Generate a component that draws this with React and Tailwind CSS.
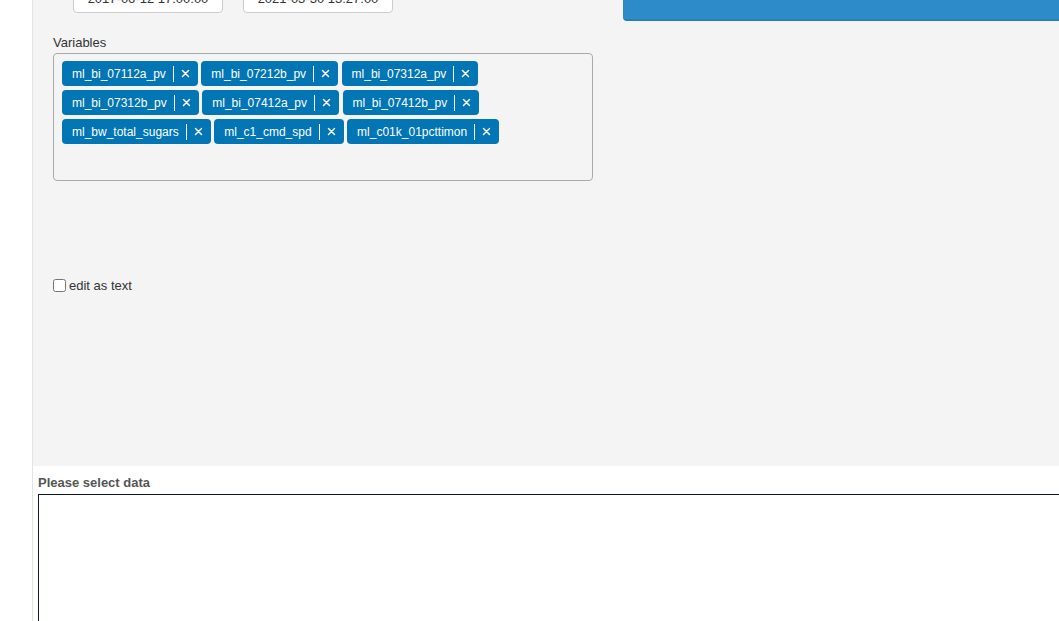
import React, { useState } from 'react';

const variables = [
    ['ml_bi_07112a_pv', 'ml_bi_07212b_pv', 'ml_bi_07312a_pv'],
    ['ml_bi_07312b_pv', 'ml_bi_07412a_pv', 'ml_bi_07412b_pv'],
    ['ml_bw_total_sugars', 'ml_c1_cmd_spd', 'ml_c01k_01pcttimon'],
];

function Tag({ name, onRemove }) {
    return (
        <div className="flex items-center h-[25px] rounded-[4px] bg-[#0275b5] text-white text-[12px] pl-[10px] pr-[8px]">
            <span>{name}</span>
            <span className="ml-[7px] h-[16px] border-l border-white"></span>
            <button className="ml-[7px] flex items-center" onClick={onRemove}>
                <svg width="9" height="9" viewBox="0 0 9 9">
                    <path d="M1.5 1.5 L7.5 7.5 M7.5 1.5 L1.5 7.5" stroke="white" strokeWidth="1.5" strokeLinecap="round" />
                </svg>
            </button>
        </div>
    );
}

export default function App() {
    const [selected, setSelected] = useState(variables);
    const [asText, setAsText] = useState(false);

    const removeTag = (name) => {
        setSelected(prev => prev.map(row => row.filter(v => v !== name)));
    };

    return (
        <div className="h-[621px] overflow-hidden flex bg-white text-[#333] font-['Liberation_Sans',Arial,sans-serif]">
            {/* left strip */}
            <div className="w-[32px] shrink-0 bg-white"></div>
            <div className="flex-1 min-w-0 border-l border-[#e3e3e3] flex flex-col">
                {/* filter panel */}
                <div className="h-[466px] bg-[#f4f4f4] shrink-0 flex flex-col">
                    <div className="flex items-start -mt-[21px] h-[42px]">
                        <div className="ml-[40px] w-[150px] h-[34px] bg-white border border-[#ccc] rounded-[4px] flex items-center justify-center pt-[6px] text-[13px]">
                            2017-06-12 17:00:00
                        </div>
                        <div className="ml-[20px] w-[150px] h-[34px] bg-white border border-[#ccc] rounded-[4px] flex items-center justify-center pt-[6px] text-[13px]">
                            2021-03-30 13:27:00
                        </div>
                        <div className="ml-[230px] mt-[8px] flex-1 h-[34px] bg-[#2e8bc9] border-b-2 border-[#2a7cb3] rounded-l-[4px]"></div>
                    </div>

                    <div className="ml-[20px] mt-[14px] text-[13px] leading-[15px]">Variables</div>
                    <div className="ml-[20px] mt-[3px] w-[540px] h-[128px] border border-[#aaa] rounded-[4px] pt-[7px] pl-[8px] flex flex-col gap-[4px]">
                        {selected.map((row, i) => (
                            <div key={i} className="flex gap-[3.5px]">
                                {row.map(name => (
                                    <Tag key={name} name={name} onRemove={() => removeTag(name)} />
                                ))}
                            </div>
                        ))}
                    </div>

                    <label className="ml-[20px] mt-[95px] flex items-center text-[13px] cursor-pointer">
                        <input
                            type="checkbox"
                            className="w-[13px] h-[13px] m-0"
                            checked={asText}
                            onChange={() => setAsText(!asText)}
                        />
                        <span className="ml-[3px]">edit as text</span>
                    </label>
                </div>

                {/* data area */}
                <div className="pl-[5px] pt-[9px]">
                    <div className="text-[13px] font-bold text-[#555] leading-[15px]">Please select data</div>
                    <div className="mt-[4px] h-[200px] w-[1100px] border border-[#0b1620] bg-white"></div>
                </div>
            </div>
        </div>
    );
}
